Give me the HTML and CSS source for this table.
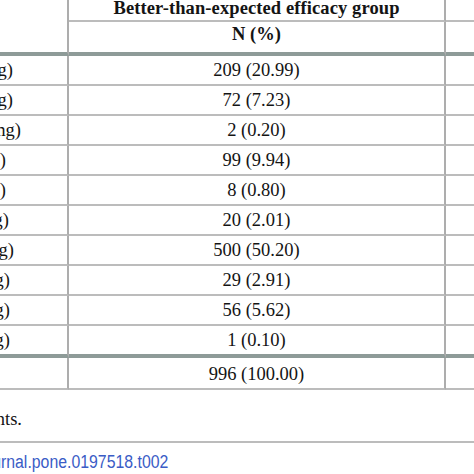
FILE: index.html
```html
<!DOCTYPE html>
<html>
<head>
<meta charset="utf-8">
<link rel="stylesheet" href="styles.css">
</head>
<body>
<div class="sheet">
  <table class="data">
    <colgroup><col class="c1"><col class="c2"><col class="c3"></colgroup>
    <thead>
      <tr class="h1">
        <th class="lab" rowspan="2">Dosage</th>
        <th class="mid">Better-than-expected efficacy group</th>
        <th class="rest"></th>
      </tr>
      <tr class="h2">
        <th class="mid">N (%)</th>
        <th class="rest"></th>
      </tr>
    </thead>
    <tbody>
      <tr><td class="lab e14">Daily dose (500 mg)</td><td class="mid">209 (20.99)</td><td class="rest"></td></tr>
      <tr><td class="lab e14">Daily dose (750 mg)</td><td class="mid">72 (7.23)</td><td class="rest"></td></tr>
      <tr><td class="lab e22">Daily dose (1000 mg)</td><td class="mid">2 (0.20)</td><td class="rest"></td></tr>
      <tr><td class="lab e7">Daily dose (1250 mg)</td><td class="mid">99 (9.94)</td><td class="rest"></td></tr>
      <tr><td class="lab e7">Daily dose (1500 mg)</td><td class="mid">8 (0.80)</td><td class="rest"></td></tr>
      <tr><td class="lab e10">Daily dose (1750 mg)</td><td class="mid">20 (2.01)</td><td class="rest"></td></tr>
      <tr><td class="lab e15">Daily dose (2000 mg)</td><td class="mid">500 (50.20)</td><td class="rest"></td></tr>
      <tr><td class="lab e11">Daily dose (2250 mg)</td><td class="mid">29 (2.91)</td><td class="rest"></td></tr>
      <tr><td class="lab e11">Daily dose (2500 mg)</td><td class="mid">56 (5.62)</td><td class="rest"></td></tr>
      <tr class="last"><td class="lab e11">Daily dose (3000 mg)</td><td class="mid">1 (0.10)</td><td class="rest"></td></tr>
    </tbody>
    <tfoot>
      <tr class="total"><td class="lab hide">Total</td><td class="mid">996 (100.00)</td><td class="rest"></td></tr>
    </tfoot>
  </table>
  <p class="note">N, number of patients.</p>
  <p class="doi"><a class="link" href="#"><span class="linktext">https://doi.org/10.1371/journal.pone.0197518.t002</span></a></p>
</div>
</body>
</html>
```

FILE: styles.css
```css
html, body {
  margin: 0;
  padding: 0;
  background: #ffffff;
  overflow: hidden;
}

.sheet {
  margin-left: -400px;
  width: 874px;
  font-family: "Liberation Serif", "Times New Roman", serif;
  font-size: 18.5px;
  color: #141414;
}

.data {
  table-layout: fixed;
  width: 874px;
  border-collapse: separate;
  border-spacing: 0;
}

.c1 { width: 469px; }
.c2 { width: 377px; }
.c3 { width: 28px; }

.data th,
.data td {
  padding: 0;
  white-space: nowrap;
  overflow: hidden;
}

.data .lab {
  text-align: right;
  border-right: 2px solid #adadad;
  border-bottom: 2px solid #bcbcbc;
}

.data .mid {
  text-align: center;
  border-right: 2px solid #adadad;
  border-bottom: 2px solid #bcbcbc;
}

.data .rest {
  border-bottom: 2px solid #bcbcbc;
}

.data thead th {
  font-weight: bold;
}

.data thead th.lab {
  color: transparent;
  vertical-align: top;
  border-bottom: 4px solid #8e9b98;
}

.data .h1 th.mid,
.data .h1 th.rest {
  line-height: 17px;
  padding-bottom: 3px;
  vertical-align: top;
  letter-spacing: 0.1px;
}

.data .h2 th.mid,
.data .h2 th.rest {
  line-height: 18px;
  padding-top: 3px;
  padding-bottom: 9px;
  vertical-align: top;
  border-bottom: 4px solid #8e9b98;
}

.data tbody td {
  line-height: 27px;
  padding-top: 1px;
  vertical-align: top;
}

.data tbody tr.last td {
  border-bottom: 4px solid #8e9b98;
}

.data .total td {
  line-height: 27px;
  padding-top: 3px;
  vertical-align: top;
}

.data td.e7 { padding-right: 61px; }
.data td.e10 { padding-right: 58px; }
.data td.e11 { padding-right: 57px; }
.data td.e14 { padding-right: 54px; }
.data td.e15 { padding-right: 53px; }
.data td.e22 { padding-right: 46px; }
.data td.hide { padding-right: 90px; }

.note {
  margin: 0;
  padding: 19px 452px 12px 0;
  line-height: 20px;
  text-align: right;
  white-space: nowrap;
  border-bottom: 2px solid #bcbcbc;
}

.doi {
  margin: 0;
  padding: 9px 306px 0 0;
  line-height: 20px;
  text-align: right;
  white-space: nowrap;
}

.link {
  color: #3a5cc6;
  text-decoration: none;
  font-family: "Liberation Sans", Arial, sans-serif;
  font-size: 18px;
}

.linktext {
  display: inline-block;
  transform: scaleX(0.88);
  transform-origin: right center;
}
```
